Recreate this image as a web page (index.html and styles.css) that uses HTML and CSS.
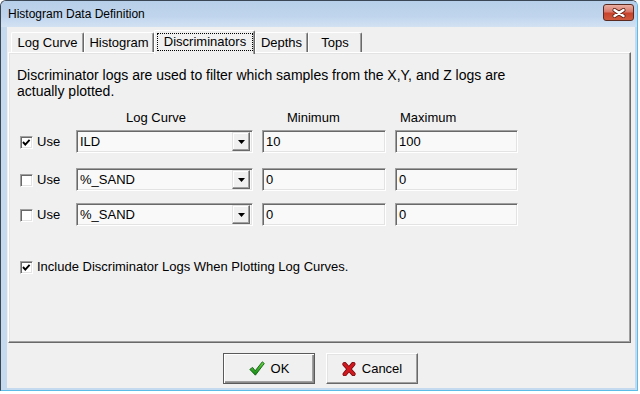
FILE: index.html
```html
<!DOCTYPE html>
<html>
<head>
<meta charset="utf-8">
<title>Histogram Data Definition</title>
<link rel="stylesheet" href="styles.css">
</head>
<body>
<div class="window">
  <div class="titlebar">
    <span class="title">Histogram Data Definition</span>
    <div class="close">
      <svg width="14" height="10" viewBox="0 0 14 10"><path d="M2.5 2 L11.5 8 M11.5 2 L2.5 8" stroke="#5c2216" stroke-width="4" stroke-linecap="round"/><path d="M2.5 2 L11.5 8 M11.5 2 L2.5 8" stroke="#fff" stroke-width="2.4" stroke-linecap="round"/></svg>
    </div>
  </div>
  <div class="client">
    <div class="tabs">
      <div class="tab w1">Log Curve</div>
      <div class="tab w2">Histogram</div>
      <div class="tab sel"><span class="focus">Discriminators</span></div>
      <div class="tab w4">Depths</div>
      <div class="tab w5">Tops</div>
    </div>
    <div class="panel">
      <p class="desc">Discriminator logs are used to filter which samples from the X,Y, and Z logs are<br>actually plotted.</p>
      <div class="row head">
        <div class="c-use"></div>
        <div class="c-combo h-log">Log Curve</div>
        <div class="c-min h-min">Minimum</div>
        <div class="c-max h-max">Maximum</div>
      </div>
      <div class="row r1">
        <div class="c-use"><span class="cb"><svg width="11" height="11" viewBox="0 0 11 11"><polyline points="2,5 4.3,7.6 8.6,2.8" fill="none" stroke="#000" stroke-width="1.9"/></svg></span><span>Use</span></div>
        <div class="c-combo combo"><span class="val">ILD</span><span class="drop"><svg width="7" height="4" viewBox="0 0 7 4"><polygon points="0,0 7,0 3.5,4" fill="#000"/></svg></span></div>
        <div class="c-min field">10</div>
        <div class="c-max field">100</div>
      </div>
      <div class="row r2">
        <div class="c-use"><span class="cb"></span><span>Use</span></div>
        <div class="c-combo combo"><span class="val">%_SAND</span><span class="drop"><svg width="7" height="4" viewBox="0 0 7 4"><polygon points="0,0 7,0 3.5,4" fill="#000"/></svg></span></div>
        <div class="c-min field">0</div>
        <div class="c-max field">0</div>
      </div>
      <div class="row r3">
        <div class="c-use"><span class="cb"></span><span>Use</span></div>
        <div class="c-combo combo"><span class="val">%_SAND</span><span class="drop"><svg width="7" height="4" viewBox="0 0 7 4"><polygon points="0,0 7,0 3.5,4" fill="#000"/></svg></span></div>
        <div class="c-min field">0</div>
        <div class="c-max field">0</div>
      </div>
      <div class="row include">
        <span class="cb"><svg width="11" height="11" viewBox="0 0 11 11"><polyline points="2,5 4.3,7.6 8.6,2.8" fill="none" stroke="#000" stroke-width="1.9"/></svg></span><span>Include Discriminator Logs When Plotting Log Curves.</span>
      </div>
    </div>
    <div class="buttons">
      <div class="btn default">
        <svg width="16" height="15" viewBox="0 0 16 15"><defs><linearGradient id="gck" x1="0" y1="0" x2="0" y2="1"><stop offset="0" stop-color="#6ad844"/><stop offset="1" stop-color="#0d8512"/></linearGradient></defs><path d="M0.8 8.4 L3.6 6.4 L6.2 9.8 L13.3 0.8 L15.3 2.5 L6.4 14.2 Z" fill="url(#gck)" stroke="#135c14" stroke-width="0.9" stroke-linejoin="round"/></svg>
        <span>OK</span>
      </div>
      <div class="btn">
        <svg width="14" height="14" viewBox="0 0 14 14"><path d="M2.6 2.2 L11.4 12 M11.2 2 L2.8 12.2" stroke="#6e0a0e" stroke-width="4.4" stroke-linecap="round"/><path d="M2.6 2.2 L11.4 12 M11.2 2 L2.8 12.2" stroke="#d0181f" stroke-width="3" stroke-linecap="round"/></svg>
        <span>Cancel</span>
      </div>
    </div>
  </div>
</div>
</body>
</html>
```
FILE: styles.css
```css
* { box-sizing: border-box; }
html, body { margin: 0; padding: 0; background: #fff; }
body { font-family: "Liberation Sans", Arial, sans-serif; font-size: 13px; color: #000; }

.window {
  width: 638px;
  height: 391px;
  border: 1px solid #3b4654;
  border-right-color: #5cbce8;
  border-bottom-color: #5cbce8;
  border-radius: 6px 6px 0 0;
  background: #c5d9ef;
  display: flex;
  flex-direction: column;
  overflow: hidden;
}

.titlebar {
  height: 26px;
  flex: none;
  display: flex;
  align-items: center;
  padding-left: 7px;
  background: linear-gradient(#b8cfe9, #c0d5ed 60%, #d3e2f3);
}
.title { font-size: 12px; line-height: 16px; }
.close {
  margin-left: auto;
  margin-right: 3px;
  align-self: flex-start;
  margin-top: 3px;
  width: 31px;
  height: 17px;
  border: 1px solid #5a2a20;
  border-radius: 3px;
  background: linear-gradient(#eab0a2, #d9786a 45%, #c8432c 55%, #cf5a3e);
  display: flex;
  align-items: center;
  justify-content: center;
}

.client {
  flex: 1;
  margin: 0 2px 2px 6px;
  background: #f0f0f0;
  display: flex;
  flex-direction: column;
}

.tabs {
  height: 25px;
  flex: none;
  display: flex;
  align-items: flex-end;
  padding-left: 4px;
}
.tab {
  height: 20px;
  border-top: 1px solid #fff;
  border-left: 1px solid #fff;
  border-right: 1px solid #696969;
  box-shadow: inset -1px 0 #a0a0a0;
  border-radius: 2px 2px 0 0;
  text-align: center;
  padding-top: 2px;
  line-height: 16px;
  background: #f0f0f0;
}
.w1 { width: 73px; }
.w2 { width: 70px; }
.w4 { width: 53px; }
.w5 { width: 54px; }
.sel {
  width: 101px;
  height: 24px;
  margin-bottom: -2px;
  position: relative;
  z-index: 2;
  padding-top: 2px;
}
.focus {
  display: block;
  margin-left: 2px;
  margin-right: 1px;
  border: 1px dotted #000;
  line-height: 16px;
}

.panel {
  margin-left: 1px;
  width: 623px;
  height: 291px;
  flex: none;
  border: 1px solid;
  border-color: #fff #696969 #696969 #fff;
  box-shadow: inset -1px -1px #a0a0a0, inset 1px 1px #e3e3e3;
}
.desc {
  margin: 0;
  padding: 14px 0 0 8px;
  font-size: 14px;
  line-height: 16px;
}

.row {
  display: flex;
  align-items: center;
  padding-left: 11px;
}
.head { margin-top: 11px; line-height: 16px; }
.r1 { margin-top: 4px; }
.r2 { margin-top: 15px; }
.r3 { margin-top: 12px; }
.include { margin-top: 33px; line-height: 16px; }

.c-use { width: 56px; display: flex; align-items: center; }
.c-combo { width: 177px; margin-right: 9px; }
.c-min { width: 124px; margin-right: 9px; }
.c-max { width: 123px; }
.h-log { padding-left: 50px; }
.h-min { padding-left: 25px; }
.h-max { padding-left: 5px; }

.cb {
  width: 13px;
  height: 13px;
  flex: none;
  margin-right: 4px;
  border: 1px solid;
  border-color: #a0a0a0 #fff #fff #a0a0a0;
  box-shadow: inset 1px 1px #696969, inset -1px -1px #e3e3e3;
  background: #fff;
  display: flex;
}
.r1 .cb, .r2 .cb, .r3 .cb { margin-top: 1px; }

.field, .combo {
  height: 23px;
  border: 1px solid;
  border-color: #a0a0a0 #fff #fff #a0a0a0;
  box-shadow: inset 1px 1px #696969, inset -1px -1px #e3e3e3;
  background: #f9f9f9;
  display: flex;
  align-items: center;
  line-height: 16px;
}
.field { padding-left: 3px; }
.combo { padding: 2px 2px 2px 3px; }
.val { flex: 1; }
.drop {
  width: 18px;
  height: 19px;
  border: 1px solid;
  border-color: #e3e3e3 #696969 #696969 #e3e3e3;
  box-shadow: inset -1px -1px #a0a0a0, inset 1px 1px #fff;
  background: #f0f0f0;
  display: flex;
  align-items: center;
  justify-content: center;
}

.buttons {
  margin-top: 10px;
  display: flex;
  justify-content: center;
  gap: 11px;
  padding-right: 1px;
}
.btn {
  width: 92px;
  height: 31px;
  display: flex;
  align-items: center;
  justify-content: center;
  gap: 6px;
  background: #f0f0f0;
  border: 1px solid;
  border-color: #fff #696969 #696969 #fff;
  box-shadow: inset -1px -1px #a0a0a0, inset 1px 1px #e3e3e3;
  line-height: 16px;
}
.btn.default {
  border-color: #5a5a5a;
  box-shadow: inset 1px 1px #fff, inset -1px -1px #8a8a8a, inset -2px -2px #a0a0a0;
}
```
